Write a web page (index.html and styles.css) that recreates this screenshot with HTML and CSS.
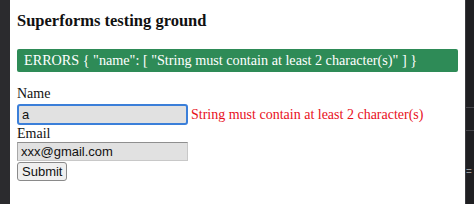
FILE: index.html
```html
<!DOCTYPE html>
<html>
<head>
	<meta charset="utf-8">
	<title>Superforms testing ground</title>
	<link rel="stylesheet" href="styles.css">
</head>
<body>
	<div class="frame">
		<div class="edge"></div>

		<div class="page">
			<h2>Superforms testing ground</h2>

			<div class="errors">ERRORS { "name": [ "String must contain at least 2 character(s)" ] }</div>

			<form class="form">
				<label for="name">Name</label>
				<div class="row">
					<input type="text" id="name" class="field focused" value="a">
					<span class="invalid">String must contain at least 2 character(s)</span>
				</div>
				<label for="email">Email</label>
				<div class="row">
					<input type="text" id="email" class="field" value="xxx@gmail.com">
				</div>
				<div class="row">
					<button type="button" class="submit">Submit</button>
				</div>
			</form>
		</div>

		<div class="side">
			<div class="side-line first"></div>
			<div class="side-line"></div>
			<div class="side-mark">=</div>
		</div>
	</div>
</body>
</html>
```

FILE: styles.css
```css
html, body {
	margin: 0;
	padding: 0;
	height: 100%;
}

body {
	font-family: "Liberation Serif", "Times New Roman", serif;
	font-size: 14px;
	color: #111;
	background: #2a2a2d;
}

.frame {
	display: flex;
	flex-direction: row;
	height: 204px;
}

.edge {
	width: 10px;
	background: #2b2b2e;
}

.page {
	flex: 1;
	background: #fff;
	padding: 0 7px;
}

h2 {
	font-size: 16.5px;
	font-weight: bold;
	margin: 11px 0 18px 0;
	line-height: 20px;
}

.errors {
	background: #2e8b57;
	color: #fff;
	font-size: 14.2px;
	line-height: 19px;
	padding: 2px 7px;
	border-radius: 2px;
}

.form {
	display: flex;
	flex-direction: column;
	margin-top: 13px;
}

.form label {
	line-height: 17px;
	height: 17px;
}

.row {
	display: flex;
	flex-direction: row;
	align-items: center;
}

.field {
	box-sizing: border-box;
	width: 171px;
	height: 19px;
	margin: 0;
	padding: 0 3px;
	font-family: "Liberation Sans", Arial, sans-serif;
	font-size: 13px;
	color: #111;
	background: #e1e1e1;
	border: 1px solid #c8c8c8;
	border-top-color: #8f8f8f;
	border-left-color: #a8a8a8;
}

.field.focused {
	height: 21px;
	border: 2px solid #3b7fd9;
	border-radius: 3px;
	margin-top: 2px;
	outline: none;
}

.invalid {
	color: #e8101c;
	font-size: 14px;
	margin-left: 3px;
	margin-top: 2px;
}

.submit {
	margin-top: 1px;
	height: 19px;
	padding: 0 4px;
	font-family: "Liberation Sans", Arial, sans-serif;
	font-size: 13px;
	color: #111;
	background: #efefef;
	border: 1px solid #8a8a8a;
	border-radius: 3px;
}

.side {
	width: 8px;
	background: #1f1f22;
	border-left: 1px solid #3a3a3e;
}

.side-line {
	height: 1px;
	background: #45454a;
	margin-top: 22px;
}

.side-line.first {
	margin-top: 107px;
}

.side-mark {
	color: #9a9a9a;
	font-family: "Liberation Sans", Arial, sans-serif;
	font-size: 10px;
	margin-top: 35px;
}
```
